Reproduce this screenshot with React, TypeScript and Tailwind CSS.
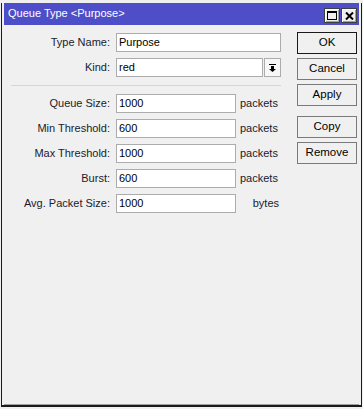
import React from "react";

const font = { fontFamily: '"Liberation Sans", Arial, sans-serif' };

function Field({
  label,
  value,
  unit,
  unitAlign = "left",
}: {
  label: string;
  value: string;
  unit?: string;
  unitAlign?: "left" | "right";
}) {
  return (
    <div className="flex h-[19px] items-center">
      <div className="w-[107px] pr-[1px] text-right text-[11px] text-[#1a1a2e]">{label}</div>
      <div className="ml-[5px] flex h-[19px] w-[120px] items-center border border-[#acacac] bg-white pl-[2px] text-[11px] text-black">
        {value}
      </div>
      {unit && (
        <div
          className={
            unitAlign === "right"
              ? "w-[43px] text-right text-[11px] text-[#1a1a2e]"
              : "w-[43px] pl-[4px] text-[11px] text-[#1a1a2e]"
          }
        >
          {unit}
        </div>
      )}
    </div>
  );
}

function DlgButton({ children, primary }: { children: React.ReactNode; primary?: boolean }) {
  return (
    <div
      className={
        primary
          ? "flex h-[22px] w-[60px] items-center justify-center border border-[#1a1a1a] bg-[#f0f0f0] text-[11.5px] text-black"
          : "flex h-[22px] w-[60px] items-center justify-center border border-[#7a7a7a] bg-[#f0f0f0] text-[11.5px] text-black"
      }
    >
      {children}
    </div>
  );
}

function TitleButton({ kind }: { kind: "max" | "close" }) {
  return (
    <div className="flex h-[15px] w-[16px] items-center justify-center border border-[#404040] bg-[#f0f0f0] shadow-[inset_1px_1px_0_#ffffff,inset_-1px_-1px_0_#a0a0a0]">
      {kind === "max" ? (
        <svg width="10" height="9" viewBox="0 0 10 9">
          <rect x="0.5" y="0.5" width="9" height="8" fill="none" stroke="#000" />
          <rect x="0" y="0" width="10" height="2" fill="#000" />
        </svg>
      ) : (
        <svg width="9" height="8" viewBox="0 0 9 8">
          <path d="M1 0.5 L8 7.5 M8 0.5 L1 7.5" stroke="#000" strokeWidth="2" />
        </svg>
      )}
    </div>
  );
}

export default function App() {
  return (
    <div className="h-[409px] w-[363px] bg-[#f0f0f0] pb-[2px] pl-[1px] pr-[1px] pt-[3px]" style={font}>
      <div className="flex h-full flex-col border-b-2 border-l border-r border-[#1a1a1a] bg-[#f0f0f0] px-[2px]">
        <div className="flex h-[22px] items-end bg-[#4e4ec8] pb-[2px] pl-[4px] pr-[2px]">
          <div className="flex-1 self-center pt-[1px] text-[11px] text-white">Queue Type &lt;Purpose&gt;</div>
          <div className="flex gap-[1px]">
            <TitleButton kind="max" />
            <TitleButton kind="close" />
          </div>
        </div>
        <div className="flex flex-1 border-b border-[#a0a0a0]">
          <div className="flex w-[280px] flex-col pt-[8px]">
            <div className="flex h-[19px] items-center">
              <div className="w-[107px] pr-[1px] text-right text-[11px] text-[#1a1a2e]">Type Name:</div>
              <div className="ml-[5px] flex h-[19px] w-[165px] items-center border border-[#acacac] bg-white pl-[2px] text-[11px] text-black">
                Purpose
              </div>
            </div>
            <div className="mt-[6px] flex h-[19px] items-center">
              <div className="w-[107px] pr-[1px] text-right text-[11px] text-[#1a1a2e]">Kind:</div>
              <div className="ml-[5px] flex h-[19px] w-[147px] items-center border border-[#acacac] bg-white pl-[2px] text-[11px] text-black">
                red
              </div>
              <div className="ml-[1px] flex h-[19px] w-[17px] items-center justify-center border border-[#acacac] bg-[#f7f7f7]">
                <svg width="7" height="8" viewBox="0 0 7 8">
                  <rect x="0" y="0" width="7" height="1" fill="#000" />
                  <rect x="2" y="2" width="3" height="3" fill="#000" />
                  <path d="M0 5 L7 5 L3.5 8 Z" fill="#000" />
                </svg>
              </div>
            </div>
            <div className="ml-[7px] mt-[8px] h-[1px] w-[270px] bg-[#d5d5d5]" />
            <div className="mt-[8px] flex flex-col gap-[6px]">
              <Field label="Queue Size:" value="1000" unit="packets" />
              <Field label="Min Threshold:" value="600" unit="packets" />
              <Field label="Max Threshold:" value="1000" unit="packets" />
              <Field label="Burst:" value="600" unit="packets" />
              <Field label="Avg. Packet Size:" value="1000" unit="bytes" unitAlign="right" />
            </div>
          </div>
          <div className="ml-[13px] flex flex-col pt-[7px]">
            <DlgButton primary>OK</DlgButton>
            <div className="mt-[4px]">
              <DlgButton>Cancel</DlgButton>
            </div>
            <div className="mt-[4px]">
              <DlgButton>Apply</DlgButton>
            </div>
            <div className="mt-[10px]">
              <DlgButton>Copy</DlgButton>
            </div>
            <div className="mt-[4px]">
              <DlgButton>Remove</DlgButton>
            </div>
          </div>
        </div>
      </div>
    </div>
  );
}
